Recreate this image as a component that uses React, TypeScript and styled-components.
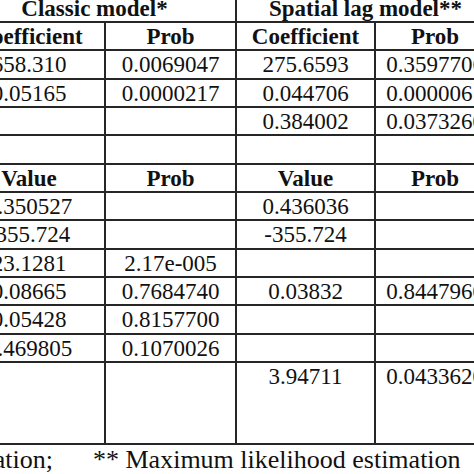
import React from "react";
import styled, { createGlobalStyle } from "styled-components";

const Global = createGlobalStyle`
  html, body { margin: 0; padding: 0; background: #ffffff; }
  body { overflow: hidden; }
`;

const Page = styled.div`
  width: 474px;
  height: 474px;
  overflow: hidden;
  background: #ffffff;
  color: #111111;
  font-family: "Liberation Serif", "Times New Roman", serif;
`;

const Grid = styled.div`
  display: grid;
  grid-template-columns: 152px 131px 139px 120px;
  grid-template-rows: repeat(13, 28.33px) 82px;
  margin-left: -46px;
  margin-top: -5.33px;
  width: max-content;
`;

const Cell = styled.div<{ $bold?: boolean; $span?: number }>`
  box-sizing: border-box;
  border-right: 2px solid #262626;
  border-bottom: 2px solid #262626;
  grid-column: span ${(p) => p.$span ?? 1};
  padding-top: 1px;
  font-size: 23px;
  line-height: 25.33px;
  font-weight: ${(p) => (p.$bold ? 700 : 400)};
  text-align: center;
  white-space: nowrap;
  overflow: hidden;
`;

const Footer = styled.div`
  display: flex;
  gap: 40px;
  font-size: 26px;
  line-height: 30px;
  white-space: nowrap;
`;

const FooterLeft = styled.span`
  flex: 0 0 400px;
  margin-left: -347px;
  text-align: right;
`;

const FooterRight = styled.span`
  flex: 0 0 auto;
`;

type Row = { cells: string[]; bold?: boolean };

const rows: Row[] = [
  { cells: ["Coefficient", "Prob", "Coefficient", "Prob"], bold: true },
  { cells: ["658.310", "0.0069047", "275.6593", "0.3597706"] },
  { cells: ["0.05165", "0.0000217", "0.044706", "0.0000061"] },
  { cells: ["", "", "0.384002", "0.0373260"] },
  { cells: ["", "", "", ""] },
  { cells: ["Value", "Prob", "Value", "Prob"], bold: true },
  { cells: ["0.350527", "", "0.436036", ""] },
  { cells: ["-355.724", "", "-355.724", ""] },
  { cells: ["23.1281", "2.17e-005", "", ""] },
  { cells: ["0.08665", "0.7684740", "0.03832", "0.8447960"] },
  { cells: ["0.05428", "0.8157700", "", ""] },
  { cells: ["0.469805", "0.1070026", "", ""] },
  { cells: ["", "", "3.94711", "0.0433620"] },
];

export default function App() {
  return (
    <Page>
      <Global />
      <Grid>
        <Cell $bold $span={2}>Classic model*</Cell>
        <Cell $bold $span={2}>Spatial lag model**</Cell>
        {rows.map((r, i) =>
          r.cells.map((c, j) => (
            <Cell key={`${i}-${j}`} $bold={r.bold}>
              {c}
            </Cell>
          ))
        )}
      </Grid>
      <Footer>
        <FooterLeft>* Ordinary least squares estimation;</FooterLeft>
        <FooterRight>** Maximum likelihood estimation</FooterRight>
      </Footer>
    </Page>
  );
}
